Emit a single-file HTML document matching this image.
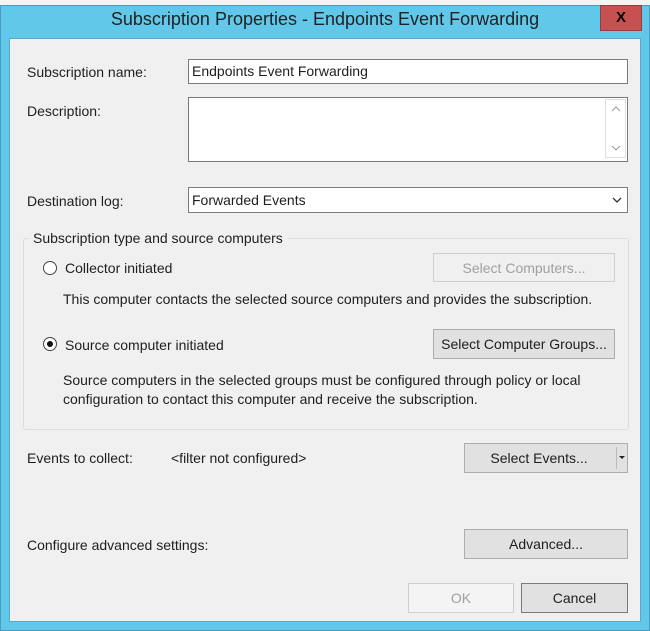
<!DOCTYPE html>
<html><head><style>
*{box-sizing:border-box;margin:0;padding:0}
body{width:650px;height:631px;background:#fff;position:relative;overflow:hidden;font-family:"Liberation Sans",sans-serif;font-size:14px;color:#1e1e1e}
.a{position:absolute;white-space:nowrap}
.frame{left:0;top:5px;width:650px;height:626px;background:#62c8ea;border:1px solid #4a9cc0}
.content{left:9px;top:38px;width:632px;height:584px;background:#f0f0f0;border:1px solid #5aa9c8}
.title{left:0;top:9px;width:650px;text-align:center;font-size:18px;color:#222}
.close{left:600px;top:5px;width:42px;height:26px;background:#c75050;color:#000;font-weight:bold;font-size:15px;text-align:center;line-height:24px;border:1px solid #9c3b3b}
.in{background:#fff;border:1px solid #7a7a7a}
.btn{background:#e1e1e1;border:1px solid #adadad;text-align:center;line-height:28px}
.dis{color:#a0a0a0;border-color:#cfcfcf;background:#f0f0f0}
.radio{width:14px;height:14px;border:1px solid #444;border-radius:50%;background:#fff}
</style></head><body>
<div class="a" style="left:0;top:0;width:650px;height:5px;background:#f4f4f4"></div>
<div class="a frame"></div>
<div class="a title">Subscription Properties - Endpoints Event Forwarding</div>
<div class="a close">X</div>
<div class="a content"></div>

<div class="a" style="left:27px;top:64px">Subscription name:</div>
<div class="a in" style="left:188px;top:59px;width:440px;height:25px;padding:3px 3px">Endpoints Event Forwarding</div>
<div class="a" style="left:27px;top:103px">Description:</div>
<div class="a in" style="left:188px;top:97px;width:440px;height:65px"></div>
<div class="a" style="left:605px;top:99px;width:21px;height:59px;border:1px solid #e0e0e0"></div>
<svg class="a" style="left:611px;top:105px" width="10" height="8"><path d="M1 6 L5 2 L9 6" fill="none" stroke="#999" stroke-width="1"/></svg>
<svg class="a" style="left:611px;top:144px" width="10" height="8"><path d="M1 2 L5 6 L9 2" fill="none" stroke="#999" stroke-width="1"/></svg>

<div class="a" style="left:27px;top:193px">Destination log:</div>
<div class="a in" style="left:188px;top:187px;width:440px;height:26px;padding:4px 3px">Forwarded Events</div>
<svg class="a" style="left:612px;top:196px" width="10" height="8"><path d="M1 2 L5 6 L9 2" fill="none" stroke="#333" stroke-width="1.3"/></svg>

<div class="a" style="left:23px;top:238px;width:606px;height:192px;border:1px solid #dcdcdc;border-radius:3px"></div>
<div class="a" style="left:29px;top:230px;background:#f0f0f0;padding:0 4px">Subscription type and source computers</div>

<div class="a radio" style="left:43px;top:261px"></div>
<div class="a" style="left:65px;top:260px">Collector initiated</div>
<div class="a btn dis" style="left:433px;top:253px;width:182px;height:29px">Select Computers...</div>
<div class="a" style="left:63px;top:291px">This computer contacts the selected source computers and provides the subscription.</div>

<div class="a radio" style="left:43px;top:337px"></div>
<div class="a" style="left:47px;top:341px;width:6px;height:6px;border-radius:50%;background:#111"></div>
<div class="a" style="left:65px;top:337px">Source computer initiated</div>
<div class="a btn" style="left:433px;top:329px;width:182px;height:30px">Select Computer Groups...</div>
<div class="a" style="left:63px;top:371px;line-height:19px">Source computers in the selected groups must be configured through policy or local<br>configuration to contact this computer and receive the subscription.</div>

<div class="a" style="left:27px;top:450px">Events to collect:</div>
<div class="a" style="left:171px;top:450px">&lt;filter not configured&gt;</div>
<div class="a btn" style="left:464px;top:443px;width:164px;height:30px;padding-right:14px">Select Events...</div>
<div class="a" style="left:616px;top:447px;width:1px;height:22px;background:#bbb"></div>
<div class="a" style="left:619px;top:456px;width:0;height:0;border-left:3px solid transparent;border-right:3px solid transparent;border-top:3px solid #222"></div>

<div class="a" style="left:27px;top:537px">Configure advanced settings:</div>
<div class="a btn" style="left:464px;top:529px;width:164px;height:30px">Advanced...</div>

<div class="a btn dis" style="left:408px;top:583px;width:106px;height:30px;background:#f4f4f4">OK</div>
<div class="a btn" style="left:521px;top:583px;width:107px;height:30px;border-color:#7a7a7a">Cancel</div>
</body></html>
